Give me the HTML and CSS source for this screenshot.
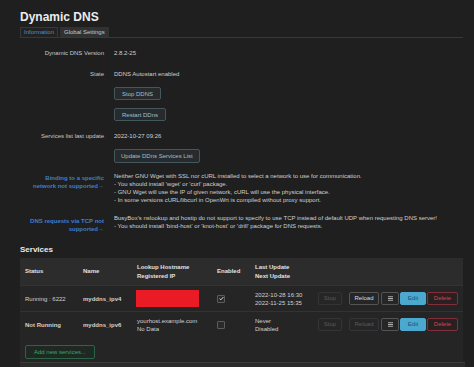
FILE: index.html
```html
<!DOCTYPE html>
<html lang="en">
<head>
  <meta charset="UTF-8" />
  <meta name="viewport" content="width=device-width, initial-scale=1.0" />
  <title>Dynamic DNS</title>
  <link rel="stylesheet" href="styles.css">
</head>
<body>

  <h2 class="title">Dynamic DNS</h2>

  <ul class="tabs">
    <li class="tab active">Information</li>
    <li class="tab">Global Settings</li>
  </ul>

  <div class="form">
    <div class="row gap-l">
      <div class="label">Dynamic DNS Version</div>
      <div class="value">2.8.2-25</div>
    </div>
    <div class="row gap-xl">
      <div class="label">State</div>
      <div class="value">DDNS Autostart enabled</div>
    </div>
    <div class="row">
      <div class="label"></div>
      <div class="value"><button class="btn">Stop DDNS</button></div>
    </div>
    <div class="row gap-s">
      <div class="label"></div>
      <div class="value"><button class="btn">Restart DDns</button></div>
    </div>
    <div class="row gap-l">
      <div class="label">Services list last update</div>
      <div class="value">2022-10-27 09:26</div>
    </div>
    <div class="row">
      <div class="label"></div>
      <div class="value"><button class="btn btn-tall">Update DDns Services List</button></div>
    </div>
    <div class="row">
      <div class="label warn">Binding to a specific network not supported→</div>
      <div class="value">
        Neither GNU Wget with SSL nor cURL installed to select a network to use for communication.<br>
        - You should install 'wget' or 'curl' package.<br>
        - GNU Wget will use the IP of given network, cURL will use the physical interface.<br>
        - In some versions cURL/libcurl in OpenWrt is compiled without proxy support.
      </div>
    </div>
    <div class="row gap-m">
      <div class="label warn warn-low">DNS requests via TCP not supported→</div>
      <div class="value">
        BusyBox's nslookup and hostip do not support to specify to use TCP instead of default UDP when requesting DNS server!<br>
        - You should install 'bind-host' or 'knot-host' or 'drill' package for DNS requests.
      </div>
    </div>
  </div>

  <h3 class="section-title">Services</h3>

  <div class="services">
    <div class="tr th-row">
      <div class="td">Status</div>
      <div class="td">Name</div>
      <div class="td">Lookup Hostname<br>Registered IP</div>
      <div class="td">Enabled</div>
      <div class="td">Last Update<br>Next Update</div>
      <div class="td"></div>
    </div>

    <div class="tr data-row">
      <div class="td">Running : 6222</div>
      <div class="td name">myddns_ipv4</div>
      <div class="td"><div class="redacted"></div></div>
      <div class="td">
        <span class="checkbox">
          <svg width="5" height="5" viewBox="0 0 5 5"><path d="M0.6 2.6 L1.9 3.8 L4.4 1" fill="none" stroke="#e8e8e8" stroke-width="0.9"/></svg>
        </span>
      </div>
      <div class="td">2022-10-28 16:30<br>2022-11-25 15:35</div>
      <div class="td actions">
        <button class="tbtn b-stop disabled">Stop</button>
        <button class="tbtn b-reload">Reload</button>
        <button class="tbtn b-menu">
          <svg width="5" height="5" viewBox="0 0 5 5"><path d="M0 0.75h5M0 2.5h5M0 4.25h5" stroke="#cfcfcf" stroke-width="0.8"/></svg>
        </button>
        <button class="tbtn b-edit">Edit</button>
        <button class="tbtn b-delete">Delete</button>
      </div>
    </div>

    <div class="tr data-row">
      <div class="td name">Not Running</div>
      <div class="td name">myddns_ipv6</div>
      <div class="td">yourhost.example.com<br>No Data</div>
      <div class="td"><span class="checkbox"></span></div>
      <div class="td">Never<br>Disabled</div>
      <div class="td actions">
        <button class="tbtn b-stop disabled">Stop</button>
        <button class="tbtn b-reload disabled">Reload</button>
        <button class="tbtn b-menu">
          <svg width="5" height="5" viewBox="0 0 5 5"><path d="M0 0.75h5M0 2.5h5M0 4.25h5" stroke="#cfcfcf" stroke-width="0.8"/></svg>
        </button>
        <button class="tbtn b-edit">Edit</button>
        <button class="tbtn b-delete">Delete</button>
      </div>
    </div>

    <div class="add-row">
      <button class="btn btn-add">Add new services...</button>
    </div>
  </div>

  <div class="next-section"></div>

</body>
</html>
```

FILE: styles.css
```css
* {
  box-sizing: border-box;
  margin: 0;
  padding: 0;
}
body {
  font-family: "Liberation Sans", Arial, sans-serif;
  font-size: 6px;
  line-height: 8px;
  background-color: #1f1f1f;
  color: #cdcdcd;
  padding: 0 11px 0 20px;
  height: 367px;
  overflow: hidden;
}
.title {
  font-size: 12px;
  line-height: 14px;
  padding-top: 10px;
  color: #ececec;
  font-weight: bold;
}
.tabs {
  list-style: none;
  display: flex;
  gap: 2px;
  margin-top: 3px;
  border-bottom: 1px solid #383838;
}
.tab {
  height: 10px;
  padding: 1px 4px;
  background-color: #313131;
  color: #c8c8c8;
}
.tab.active {
  padding: 1px 3px;
  background-color: #222;
  border: 1px solid #383838;
  border-bottom: none;
  line-height: 7px;
  color: #4d93c6;
}
.row {
  display: grid;
  grid-template-columns: 84px 1fr;
  column-gap: 10px;
  margin-top: 9px;
}
.row.gap-s { margin-top: 8px; }
.row.gap-m { margin-top: 10px; }
.row.gap-l { margin-top: 11px; }
.row.gap-xl { margin-top: 13px; }
.label {
  text-align: right;
  color: #c8c8c8;
}
.label.warn {
  color: #3f7ecb;
  font-weight: bold;
  padding-top: 2px;
  padding-left: 8px;
}
.label.warn-low {
  padding-top: 3px;
}
.value {
  color: #d0d0d0;
}
.btn {
  display: inline-block;
  height: 13px;
  line-height: 11px;
  padding: 0 7px;
  font: inherit;
  font-size: 6px;
  border: 1px solid #43575d;
  border-radius: 2px;
  background-color: #272b2d;
  color: #9cc0d4;
}
.btn-tall {
  height: 14px;
  line-height: 12px;
  padding: 0 6px;
}
.section-title {
  font-size: 8px;
  line-height: 10px;
  margin-top: 12px;
  color: #eaeaea;
}
.services {
  margin-top: 3px;
  background-color: #252525;
  padding-bottom: 3px;
}
.tr {
  display: grid;
  grid-template-columns: 58px 54px 80px 38px 63px 1fr;
  align-items: center;
}
.td {
  padding: 0 5px;
}
.th-row {
  height: 27px;
  background-color: #2c2c2c;
  font-weight: bold;
  line-height: 8.4px;
  color: #e2e2e2;
}
.data-row {
  height: 26px;
  border-top: 1px solid #333;
  color: #d2d2d2;
}
.name {
  font-weight: bold;
}
.redacted {
  width: 63px;
  height: 17px;
  background-color: #ea1b25;
  margin-left: -1px;
}
.checkbox {
  display: flex;
  align-items: center;
  justify-content: center;
  width: 8px;
  height: 8px;
  border: 1px solid #5c5c5c;
  border-radius: 1px;
  background-color: #2a2a2a;
}
.actions {
  display: flex;
  justify-content: flex-end;
  gap: 1px;
}
.tbtn {
  height: 13px;
  font: inherit;
  font-size: 6px;
  line-height: 11px;
  border: 1px solid #545454;
  border-radius: 2px;
  background-color: #262626;
  color: #dcdcdc;
  display: flex;
  align-items: center;
  justify-content: center;
}
.tbtn.disabled {
  border-color: #343434;
  color: #5a5a5a;
}
.b-stop { width: 24px; margin-right: 6px; }
.b-reload { width: 30px; margin-right: 1px; }
.b-menu { width: 18px; }
.b-edit {
  width: 26px;
  background-color: #4ba8cf;
  border-color: #4ba8cf;
  color: #1d5273;
}
.b-delete {
  width: 31px;
  background-color: #2a2021;
  border-color: #80303a;
  color: #d8434f;
}
.add-row {
  padding: 8px 5px 0;
}
.btn-add {
  height: 14px;
  line-height: 12px;
  padding: 0 8px;
  border-color: #2e6446;
  background-color: #1f2923;
  color: #36a866;
}
.next-section {
  height: 6px;
  margin-right: -2px;
  background-color: #2b2b2b;
  border-top: 1px solid #3a3a3a;
}
```
